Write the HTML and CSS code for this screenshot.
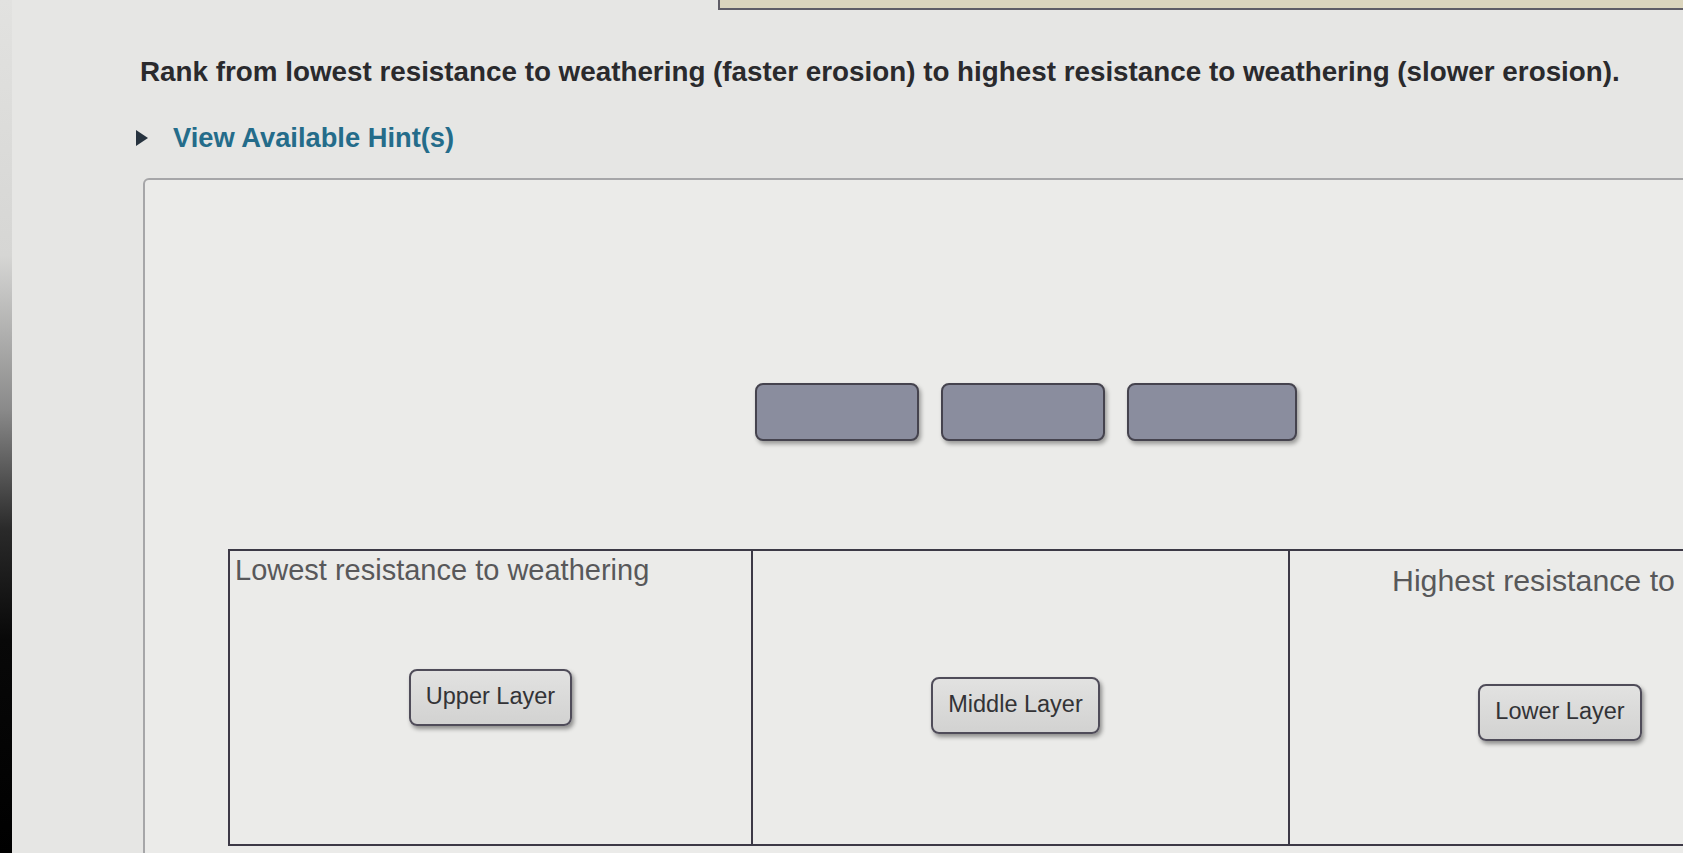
FILE: index.html
```html
<!DOCTYPE html>
<html lang="en">
<head>
<meta charset="utf-8">
<title>Ranking task</title>
<link rel="stylesheet" href="styles.css">
</head>
<body>
  <div class="bezel"></div>
  <main class="screen">
    <div class="topbar"></div>
    <p class="question">Rank from lowest resistance to weathering (faster erosion) to highest resistance to weathering (slower erosion).</p>
    <div class="hint"><span class="hint-arrow"></span><span class="hint-text">View Available Hint(s)</span></div>
    <section class="board">
      <div class="slots">
        <div class="slot"></div>
        <div class="slot"></div>
        <div class="slot slot--wide"></div>
      </div>
      <div class="ranking">
        <div class="col col--low">
          <div class="col-head">Lowest resistance to weathering</div>
          <div class="card-row"><div class="card">Upper Layer</div></div>
        </div>
        <div class="col col--mid">
          <div class="col-head"></div>
          <div class="card-row"><div class="card">Middle Layer</div></div>
        </div>
        <div class="col col--high">
          <div class="col-head">Highest resistance to</div>
          <div class="card-row"><div class="card">Lower Layer</div></div>
        </div>
      </div>
    </section>
  </main>
</body>
</html>
```
FILE: styles.css
```css
html, body {
  margin: 0;
  height: 853px;
  overflow: hidden;
}
body {
  display: flex;
  background: #e6e6e4;
  font-family: "Liberation Sans", Arial, sans-serif;
}
.bezel {
  flex: none;
  width: 12px;
  background: linear-gradient(to bottom, #e2e2e0 0%, #d6d6d4 30%, #8a8a8a 48%, #2a2a2a 62%, #080808 75%, #000 100%);
}
.screen {
  flex: 1;
  min-width: 0;
  overflow: hidden;
}
.topbar {
  margin-left: 706px;
  height: 8px;
  background: #dbd5bd;
  border-left: 2px solid #5f5d66;
  border-bottom: 2px solid #5f5d66;
}
.question {
  margin: 46px 0 0 128px;
  font-size: 27.8px;
  line-height: 32px;
  font-weight: bold;
  color: #2a2a2d;
  white-space: nowrap;
}
.hint {
  display: flex;
  align-items: center;
  gap: 25px;
  margin: 34px 0 0 124px;
  height: 32px;
}
.hint-arrow {
  width: 0;
  height: 0;
  border-left: 12px solid #27333f;
  border-top: 8px solid transparent;
  border-bottom: 8px solid transparent;
}
.hint-text {
  font-size: 27.3px;
  line-height: 32px;
  font-weight: bold;
  color: #246c8a;
}
.board {
  box-sizing: border-box;
  width: 1766px;
  height: 900px;
  margin: 24px 0 0 131px;
  padding-top: 203px;
  border: 2px solid #a6a6a8;
  border-radius: 6px;
  background: #ebebe9;
}
.slots {
  display: flex;
  justify-content: center;
  gap: 22px;
}
.slot {
  box-sizing: border-box;
  width: 164px;
  height: 58px;
  border: 2px solid #45434e;
  border-radius: 8px;
  background: #8a8d9e;
  box-shadow: 2px 3px 4px rgba(0, 0, 0, 0.35);
}
.slot--wide {
  width: 170px;
}
.ranking {
  display: grid;
  grid-template-columns: 521px 537px 542px;
  width: max-content;
  height: 297px;
  box-sizing: border-box;
  margin: 108px 0 0 83px;
  border: 2px solid #3c3946;
}
.col + .col {
  border-left: 2px solid #3c3946;
}
.col-head {
  min-height: 34px;
  font-size: 29px;
  line-height: 34px;
  color: #58585a;
  white-space: nowrap;
}
.col--low .col-head {
  padding: 2px 0 0 5px;
}
.col--high .col-head {
  padding: 13px 0 0 102px;
  font-size: 30.3px;
}
.card-row {
  display: flex;
  justify-content: center;
}
.col--low .card-row { padding-top: 82px; }
.col--mid .card-row { padding-top: 92px; }
.col--high .card-row { padding-top: 86px; }
.col--mid .card { margin-left: -10px; }
.card {
  box-sizing: border-box;
  height: 57px;
  padding: 0 15px;
  border: 2px solid #4f4c59;
  border-radius: 8px;
  background: linear-gradient(to bottom, #e2e2e1, #d2d2d1);
  box-shadow: 2px 3px 4px rgba(0, 0, 0, 0.4);
  font-size: 23.5px;
  line-height: 51px;
  color: #333336;
  white-space: nowrap;
}
```
